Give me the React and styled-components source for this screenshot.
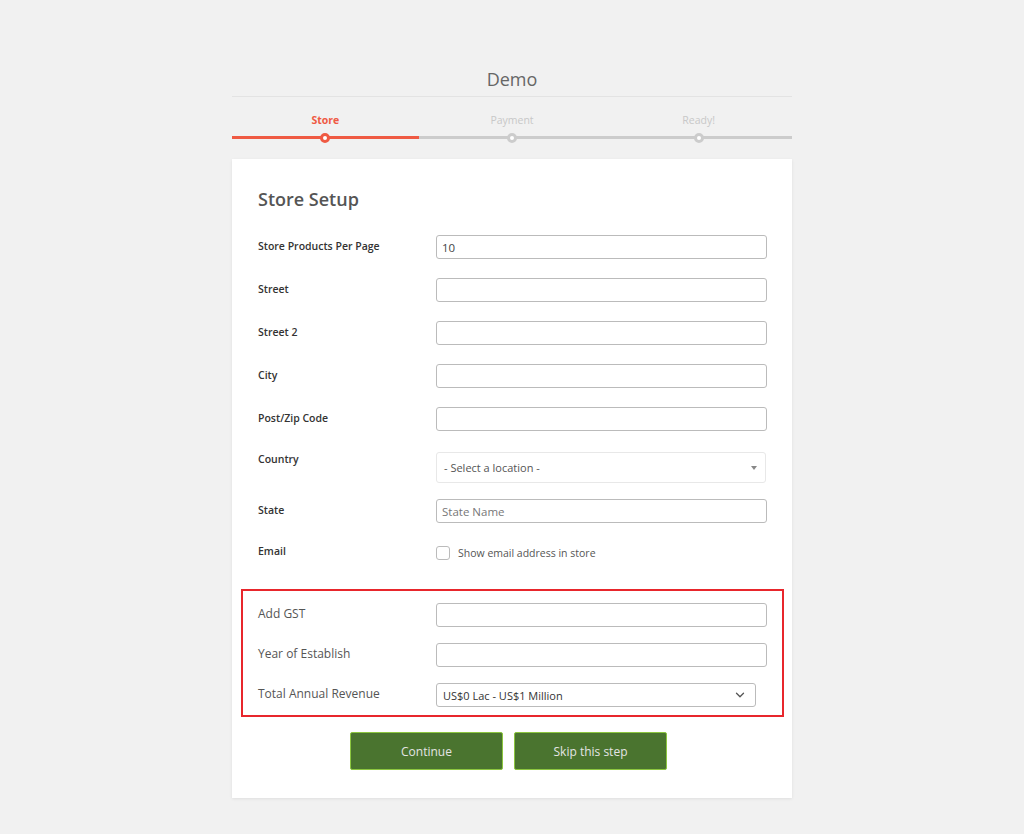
import styled, { createGlobalStyle } from 'styled-components';
import { ChevronDown } from 'lucide-react';

const GlobalStyle = createGlobalStyle`
  html, body {
    margin: 0;
    padding: 0;
    background: #f1f1f1;
    font-family: "Open Sans", "Noto Sans", sans-serif;
  }
  * { box-sizing: border-box; }
`;

const steps = ['Store', 'Payment', 'Ready!'];

const fields = [
  { label: 'Store Products Per Page', value: '10' },
  { label: 'Street' },
  { label: 'Street 2' },
  { label: 'City' },
  { label: 'Post/Zip Code' },
];

const App = () => {
  return (
    <Page>
      <GlobalStyle />
      <Wrapper>
        <Title>Demo</Title>

        <Steps>
          {steps.map((s, i) => (
            <Step key={s} active={i === 0}>
              <StepLabel active={i === 0}>{s}</StepLabel>
              <StepBar active={i === 0}>
                <Dot active={i === 0} />
              </StepBar>
            </Step>
          ))}
        </Steps>

        <Card>
          <Heading>Store Setup</Heading>

          <Form>
            {fields.map((f) => (
              <Row key={f.label}>
                <Label>{f.label}</Label>
                <Input defaultValue={f.value || ''} />
              </Row>
            ))}

            <Row top>
              <Label>Country</Label>
              <SelectBox>
                <span>- Select a location -</span>
                <Caret />
              </SelectBox>
            </Row>

            <Row>
              <Label>State</Label>
              <Input placeholder="State Name" />
            </Row>

            <Row>
              <Label>Email</Label>
              <CheckLabel>
                <Check />
                Show email address in store
              </CheckLabel>
            </Row>
          </Form>

          <Highlight>
            <Row>
              <PlainLabel>Add GST</PlainLabel>
              <Input />
            </Row>
            <Row>
              <PlainLabel>Year of Establish</PlainLabel>
              <Input />
            </Row>
            <Row>
              <PlainLabel>Total Annual Revenue</PlainLabel>
              <Dropdown>
                <span>US$0 Lac - US$1 Million</span>
                <ChevronDown size={14} strokeWidth={2.2} color="#555" />
              </Dropdown>
            </Row>
          </Highlight>

          <Buttons>
            <Button>Continue</Button>
            <Button>Skip this step</Button>
          </Buttons>
        </Card>
      </Wrapper>
    </Page>
  );
};

export default App;

const Page = styled.div`
  min-height: 834px;
  padding-top: 64px;
`;

const Wrapper = styled.div`
  width: 560px;
  margin: 0 auto;
`;

const Title = styled.h1`
  margin: 0;
  height: 33px;
  line-height: 30px;
  text-align: center;
  font-size: 18px;
  font-weight: 400;
  color: #666;
  border-bottom: 1px solid #e3e3e3;
`;

const Steps = styled.div`
  display: flex;
  padding-top: 15px;
  margin-bottom: 20px;
`;

const Step = styled.div`
  flex: 1;
  display: flex;
  flex-direction: column;
  align-items: center;
`;

const StepLabel = styled.div`
  height: 16px;
  line-height: 16px;
  font-size: 10.5px;
  font-weight: ${({ active }) => (active ? 700 : 400)};
  color: ${({ active }) => (active ? '#ef5a43' : '#c8c8c8')};
  margin-bottom: 8px;
`;

const StepBar = styled.div`
  width: 100%;
  height: 3px;
  background: ${({ active }) => (active ? '#ef5a43' : '#cccccc')};
  display: flex;
  justify-content: center;
  align-items: center;
`;

const Dot = styled.span`
  width: 10px;
  height: 10px;
  border-radius: 50%;
  background: #fff;
  border: 3px solid ${({ active }) => (active ? '#ef5a43' : '#cccccc')};
`;

const Card = styled.div`
  background: #fff;
  padding: 28px 25px 28px 26px;
  box-shadow: 0 1px 3px rgba(0, 0, 0, 0.08);
`;

const Heading = styled.h2`
  margin: 0 0 24px;
  height: 24px;
  line-height: 24px;
  font-size: 18px;
  font-weight: 600;
  color: #555;
`;

const Form = styled.div`
  display: flex;
  flex-direction: column;
  gap: 19px;
`;

const Row = styled.div`
  display: grid;
  grid-template-columns: 178px 1fr;
  align-items: ${({ top }) => (top ? 'start' : 'center')};
`;

const Label = styled.label`
  font-size: 10.5px;
  font-weight: 600;
  color: #333;
  line-height: 18px;
  padding-bottom: 3px;
`;

const PlainLabel = styled.label`
  font-size: 12px;
  color: #555;
  line-height: 18px;
  padding-bottom: 2px;
`;

const Input = styled.input`
  width: 100%;
  height: 24px;
  padding: 0 5px;
  border: 1px solid #bbb;
  border-radius: 3px;
  font-family: inherit;
  font-size: 11.5px;
  color: #444;
  outline: none;
  &::placeholder {
    color: #777;
  }
`;

const SelectBox = styled.div`
  position: relative;
  width: 330px;
  height: 31px;
  margin-top: 2px;
  margin-bottom: -3px;
  padding: 0 7px;
  display: flex;
  align-items: center;
  border: 1px solid #e8e8e8;
  border-radius: 3px;
  font-size: 11px;
  color: #555;
`;

const Caret = styled.span`
  position: absolute;
  right: 8px;
  top: 13px;
  width: 0;
  height: 0;
  border-left: 3.5px solid transparent;
  border-right: 3.5px solid transparent;
  border-top: 4px solid #888;
`;

const CheckLabel = styled.label`
  display: flex;
  align-items: center;
  gap: 8px;
  font-size: 10.5px;
  color: #555;
`;

const Check = styled.span`
  width: 14px;
  height: 14px;
  border: 1px solid #bbb;
  border-radius: 3px;
  background: #fff;
`;

const Highlight = styled.div`
  margin: 26px -17px 0 -17px;
  padding: 12px 15px 8px 15px;
  border: 2px solid #e8262c;
  display: flex;
  flex-direction: column;
  gap: 16px;
`;

const Dropdown = styled.div`
  width: 320px;
  height: 24px;
  padding: 0 8px 0 6px;
  display: flex;
  align-items: center;
  justify-content: space-between;
  border: 1px solid #bbb;
  border-radius: 3px;
  font-size: 11px;
  color: #333;
`;

const Buttons = styled.div`
  display: flex;
  justify-content: center;
  gap: 11px;
  margin-top: 15px;
  margin-left: -8px;
`;

const Button = styled.button`
  width: 153px;
  height: 38px;
  background: #4a742f;
  border: 1px solid #8cc63f;
  border-radius: 2px;
  color: #e4e4e4;
  font-family: inherit;
  font-size: 12px;
  cursor: pointer;
`;
